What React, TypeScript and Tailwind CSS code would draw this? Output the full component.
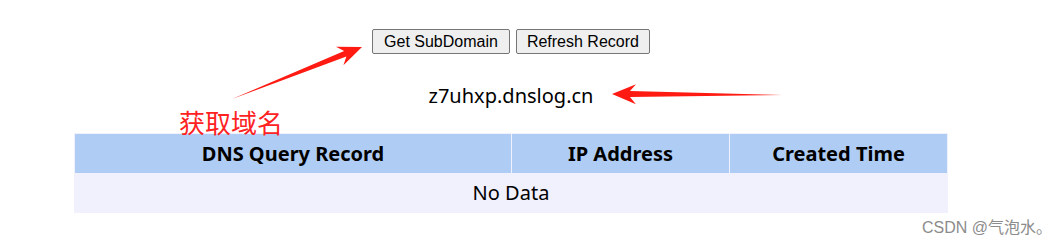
import React from 'react';

const records: { domain: string; ip: string; time: string }[] = [];

const Arrow = ({ x1, y1, x2, y2 }: { x1: number; y1: number; x2: number; y2: number }) => {
  // tapered red arrow, drawn from tail (x1,y1) to tip (x2,y2)
  const dx = x2 - x1;
  const dy = y2 - y1;
  const len = Math.hypot(dx, dy);
  const ux = dx / len;
  const uy = dy / len;
  const nx = -uy;
  const ny = ux;
  const headLen = 24;
  const headW = 10;
  const shaftW = 3;
  const bx = x2 - ux * headLen;
  const by = y2 - uy * headLen;
  const ix = x2 - ux * (headLen - 6);
  const iy = y2 - uy * (headLen - 6);
  const pts = [
    [x1, y1],
    [ix + nx * shaftW, iy + ny * shaftW],
    [bx + nx * headW, by + ny * headW],
    [x2, y2],
    [bx - nx * headW, by - ny * headW],
    [ix - nx * shaftW, iy - ny * shaftW],
  ]
    .map(p => p.join(','))
    .join(' ');
  return <polygon points={pts} fill="#ff1a12" />;
};

const App = () => {
  return (
    <div className="relative h-[247px] w-[1064px] overflow-hidden bg-white font-['Noto_Sans','Noto_Sans_CJK_SC',sans-serif]">
      <div className="w-[1022px] pt-[29px]">
        <div className="flex justify-center gap-[6px] font-['Liberation_Sans',Arial,sans-serif] text-[16px] text-black">
          <button className="h-[25px] rounded-[2px] border border-[#767676] bg-[#efefef] px-[11px] leading-none">
            Get SubDomain
          </button>
          <button className="h-[25px] rounded-[2px] border border-[#767676] bg-[#efefef] px-[10px] leading-none">
            Refresh Record
          </button>
        </div>

        <p className="mt-[28px] text-center text-[20px] leading-[28px] text-black">z7uhxp.dnslog.cn</p>

        <div className="mx-auto mt-[23px] w-[874px] bg-[#f1f0fd] p-px">
          <div className="grid grid-cols-[436px_217px_1fr] gap-px bg-[#f1f0fd]">
            <div className="flex h-[39px] items-center justify-center bg-[#afcdf4] text-[20px] font-bold text-black">DNS Query Record</div>
            <div className="flex h-[39px] items-center justify-center bg-[#afcdf4] text-[20px] font-bold text-black">IP Address</div>
            <div className="flex h-[39px] items-center justify-center bg-[#afcdf4] text-[20px] font-bold text-black">Created Time</div>
          </div>
          {records.length === 0 ? (
            <div className="flex h-[39px] items-center justify-center text-[20px] text-black">No Data</div>
          ) : (
            records.map(r => (
              <div key={r.domain} className="grid grid-cols-[436px_217px_1fr] text-[20px]">
                <div className="text-center">{r.domain}</div>
                <div className="text-center">{r.ip}</div>
                <div className="text-center">{r.time}</div>
              </div>
            ))
          )}
        </div>
      </div>

      {/* annotations over the screenshot */}
      <svg className="pointer-events-none absolute left-0 top-0" width="1064" height="247">
        <Arrow x1={232} y1={99} x2={362} y2={47} />
        <Arrow x1={782} y1={95} x2={612} y2={94} />
      </svg>
      <span className="absolute left-[179px] top-[105px] text-[26px] leading-[34px] text-[#ff2222] font-['Noto_Sans_CJK_SC',sans-serif]">
        获取域名
      </span>
      <span className="absolute left-[922px] top-[217px] text-[16px] leading-[22px] text-[#8c8c8c] font-['Liberation_Sans','Noto_Sans_CJK_SC',sans-serif]">
        CSDN @气泡水。
      </span>
    </div>
  );
};

export default App;
